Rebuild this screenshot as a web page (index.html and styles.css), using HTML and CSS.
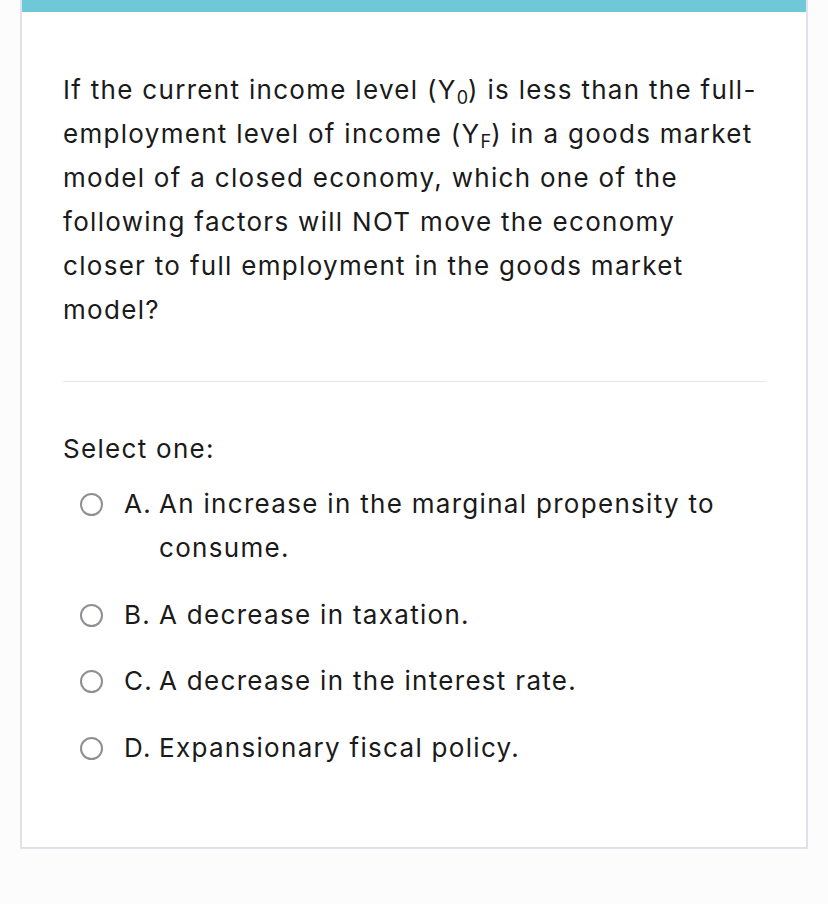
FILE: index.html
```html
<!DOCTYPE html>
<html lang="en">
<head>
<meta charset="utf-8">
<link rel="stylesheet" href="styles.css">
</head>
<body>
<div class="card">
  <div class="topbar"></div>
  <div class="content">
    <p class="question">If the current income level (Y<sub>0</sub>) is less than the full-employment level of income (Y<sub>F</sub>) in a goods market model of a closed economy, which one of the following factors will NOT move the economy closer to full employment in the goods market model?</p>
    <hr class="sep">
    <p class="prompt">Select one:</p>
    <ul class="options">
      <li class="option"><span class="radio"></span><span class="letter">A.</span><span class="text">An increase in the marginal propensity to consume.</span></li>
      <li class="option"><span class="radio"></span><span class="letter">B.</span><span class="text">A decrease in taxation.</span></li>
      <li class="option"><span class="radio"></span><span class="letter">C.</span><span class="text">A decrease in the interest rate.</span></li>
      <li class="option"><span class="radio"></span><span class="letter">D.</span><span class="text">Expansionary fiscal policy.</span></li>
    </ul>
  </div>
</div>
</body>
</html>
```
FILE: styles.css
```css
html, body {
  margin: 0;
  padding: 0;
  background: #fcfcfd;
}
body {
  font-family: Inter, "Noto Sans", sans-serif;
  color: #1a1a1a;
  font-size: 26px;
  letter-spacing: 1.3px;
}
.card {
  margin-left: 20px;
  width: 784px;
  height: 847px;
  border: 2px solid #e1e2e8;
  border-top: none;
  background: #ffffff;
}
.topbar {
  height: 12px;
  background: #6ec8d8;
}
.content {
  padding: 56px 40px 0 41px;
}
.question {
  margin: 0;
  line-height: 44px;
}
.question sub {
  font-size: 18px;
  line-height: 0;
  vertical-align: -5px;
  letter-spacing: 0;
}
.sep {
  margin: 49px 0 0 0;
  border: none;
  border-top: 1px solid #e6e7ec;
  height: 0;
}
.prompt {
  margin: 45px 0 0 0;
  line-height: 44px;
}
.options {
  list-style: none;
  margin: 0;
  padding: 0;
  display: flex;
  flex-direction: column;
}
.option {
  display: flex;
  align-items: flex-start;
  padding: 11px 0 11.5px;
  line-height: 44px;
}
.radio {
  flex: none;
  box-sizing: border-box;
  width: 23px;
  height: 23px;
  border: 2.5px solid #8e8e93;
  border-radius: 50%;
  margin: 11px 0 0 17px;
}
.letter {
  flex: none;
  width: 35px;
  margin-left: 21px;
}
.text {
  flex: 1;
}
```
